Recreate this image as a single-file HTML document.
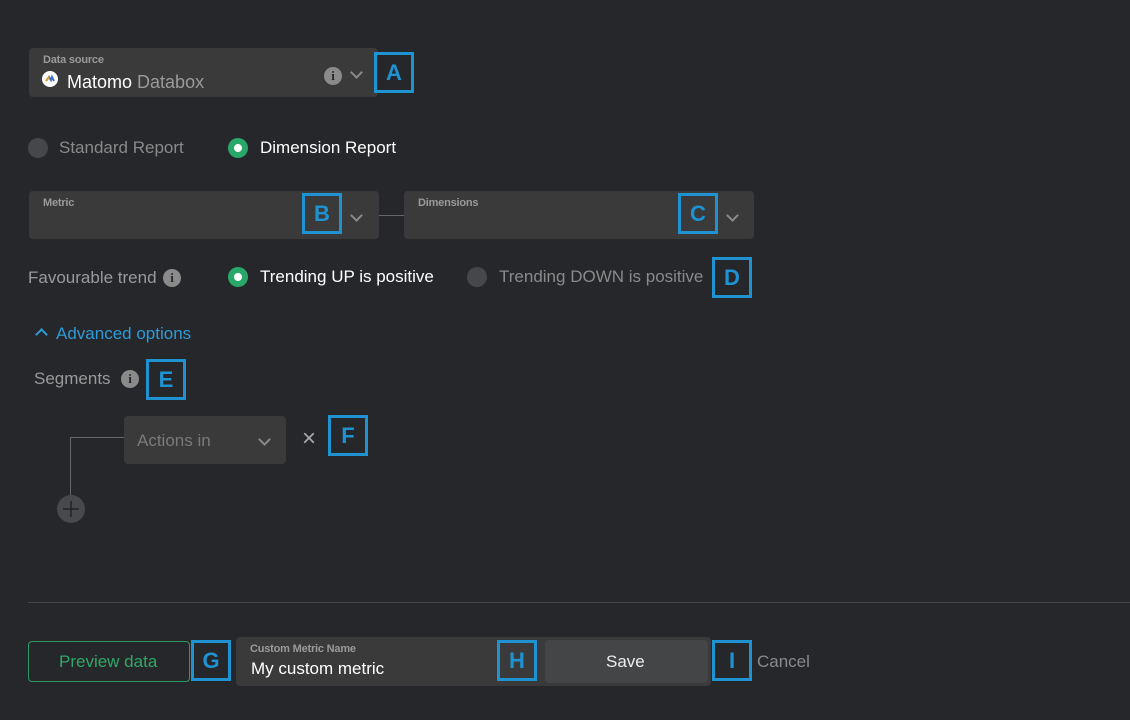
<!DOCTYPE html>
<html><head><style>
*{box-sizing:border-box;margin:0;padding:0}
body{width:1130px;height:720px;background:#25272b;font-family:"Liberation Sans",sans-serif;position:relative;overflow:hidden;color:#eee}
.a{position:absolute}
.fld{position:absolute;background:#3a3a3b;border-radius:4px}
.lbl{position:absolute;font-size:11px;font-weight:bold;color:#9a9a9a;letter-spacing:-0.2px}
.tag{position:absolute;width:40px;height:41px;border:3px solid #1f93d2;color:#1f93d2;font-weight:bold;font-size:22px;text-align:center;line-height:35px}
.chev{position:absolute;width:9px;height:9px;border-right:2px solid #8a8a8a;border-bottom:2px solid #8a8a8a;transform:rotate(45deg)}
.rad{position:absolute;width:20px;height:20px;border-radius:50%;background:#45474b}
.rad.on{background:#2aa86a}
.rad.on:after{content:"";position:absolute;left:6px;top:6px;width:8px;height:8px;border-radius:50%;background:#fff}
.t{position:absolute;font-size:17px;white-space:nowrap}
.info{position:absolute;width:18px;height:18px;border-radius:50%;background:#8a8a8a;color:#25272b;font-weight:bold;font-size:13px;text-align:center;line-height:18px;font-family:"Liberation Serif",serif}
</style></head><body>
<div class="fld" style="left:29px;top:48px;width:349px;height:49px"></div>
<div class="lbl" style="left:43px;top:54px">Data source</div>
<div class="a" style="left:42px;top:71px;width:16px;height:16px;border-radius:50%;background:#fff"><svg width="16" height="16"><path d="M4 10 L7 6 L9 9 L10 6 L12 10" stroke="#3b6fd0" stroke-width="2" fill="none"/><path d="M4 10 L7 6" stroke="#e8a020" stroke-width="2"/></svg></div>
<div class="t" style="left:67px;top:72px;font-size:18px;color:#fff">Matomo <span style="color:#9a9a9a">Databox</span></div>
<div class="info" style="left:324px;top:67px">i</div>
<div class="chev" style="left:352px;top:68px"></div>
<div class="tag" style="left:374px;top:52px">A</div>

<div class="rad" style="left:28px;top:138px"></div>
<div class="t" style="left:59px;top:138px;color:#8a8a8a">Standard Report</div>
<div class="rad on" style="left:228px;top:138px"></div>
<div class="t" style="left:260px;top:138px;color:#fff">Dimension Report</div>

<div class="fld" style="left:29px;top:191px;width:350px;height:48px"></div>
<div class="lbl" style="left:43px;top:197px">Metric</div>
<div class="chev" style="left:352px;top:211px"></div>
<div class="tag" style="left:302px;top:193px">B</div>
<div class="a" style="left:379px;top:215px;width:25px;height:1px;background:#666"></div>
<div class="fld" style="left:404px;top:191px;width:350px;height:48px"></div>
<div class="lbl" style="left:418px;top:197px">Dimensions</div>
<div class="chev" style="left:728px;top:211px"></div>
<div class="tag" style="left:678px;top:193px">C</div>

<div class="t" style="left:28px;top:268px;color:#9a9a9a">Favourable trend</div>
<div class="info" style="left:163px;top:269px">i</div>
<div class="rad on" style="left:228px;top:267px"></div>
<div class="t" style="left:260px;top:267px;color:#fff">Trending UP is positive</div>
<div class="rad" style="left:467px;top:267px"></div>
<div class="t" style="left:499px;top:267px;color:#8a8a8a">Trending DOWN is positive</div>
<div class="tag" style="left:712px;top:257px">D</div>

<div class="chev" style="left:37px;top:330px;transform:rotate(225deg);border-color:#2e9ad6"></div>
<div class="t" style="left:56px;top:324px;color:#2e9ad6">Advanced options</div>
<div class="t" style="left:34px;top:369px;color:#9a9a9a">Segments</div>
<div class="info" style="left:121px;top:370px">i</div>
<div class="tag" style="left:146px;top:359px">E</div>

<div class="a" style="left:70px;top:437px;width:1px;height:60px;background:#666"></div>
<div class="a" style="left:70px;top:437px;width:54px;height:1px;background:#666"></div>
<div class="fld" style="left:124px;top:416px;width:162px;height:48px;background:#3a3a3b"></div>
<div class="t" style="left:137px;top:431px;color:#7a7a7a">Actions in</div>
<div class="chev" style="left:260px;top:435px"></div>
<div class="t" style="left:302px;top:425px;font-size:24px;color:#aaa">×</div>
<div class="tag" style="left:328px;top:415px">F</div>
<div class="a" style="left:57px;top:495px;width:28px;height:28px;border-radius:50%;background:#47494c"><svg width="28" height="28"><path d="M14 6V22M6 14H22" stroke="#222" stroke-width="1.5"/></svg></div>

<div class="a" style="left:28px;top:602px;width:1102px;height:1px;background:#44464a"></div>

<div class="a" style="left:28px;top:641px;width:162px;height:41px;border:1px solid #2a9a5e;border-radius:4px"></div>
<div class="t" style="left:59px;top:652px;color:#2fa866">Preview data</div>
<div class="tag" style="left:191px;top:640px">G</div>
<div class="fld" style="left:236px;top:637px;width:475px;height:49px"></div>
<div class="lbl" style="left:250px;top:643px">Custom Metric Name</div>
<div class="t" style="left:251px;top:659px;color:#fff">My custom metric</div>
<div class="a" style="left:545px;top:640px;width:163px;height:43px;background:#444547;border-radius:4px"></div>
<div class="t" style="left:606px;top:652px;color:#eee">Save</div>
<div class="tag" style="left:497px;top:640px">H</div>
<div class="tag" style="left:712px;top:640px">I</div>
<div class="t" style="left:757px;top:652px;color:#8a8a8a">Cancel</div>
</body></html>
